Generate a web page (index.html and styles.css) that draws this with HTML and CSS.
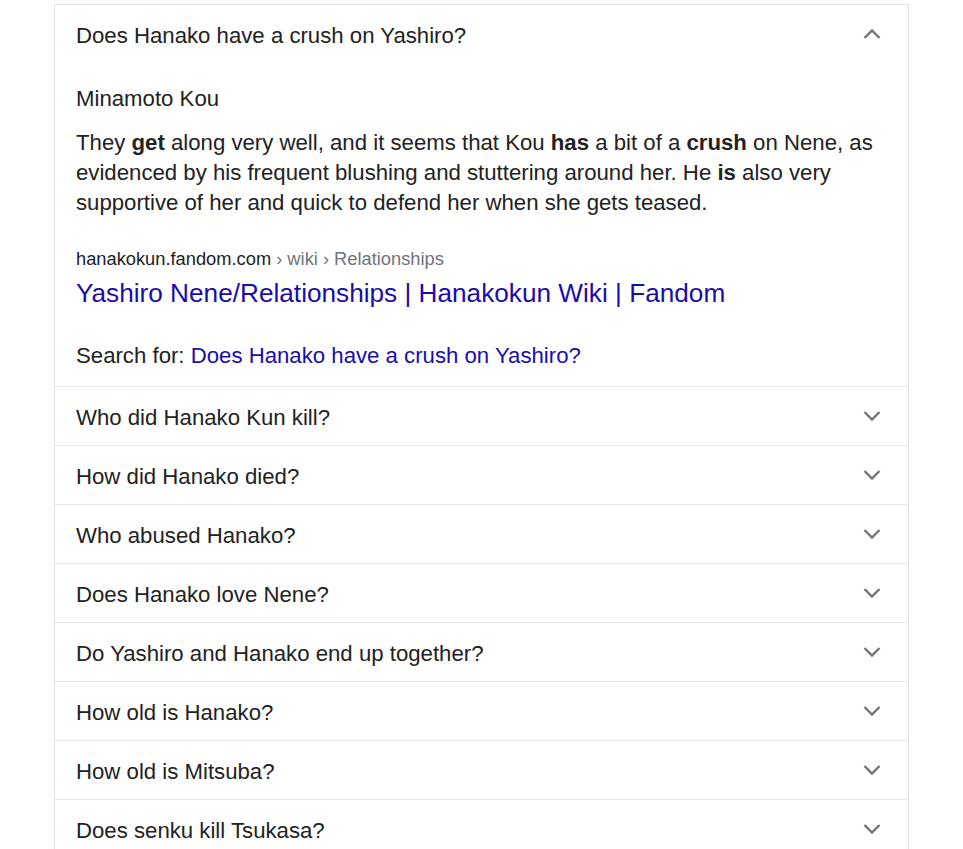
FILE: index.html
```html
<!DOCTYPE html>
<html lang="en">
<head>
  <meta charset="UTF-8" />
  <meta name="viewport" content="width=device-width, initial-scale=1.0"/>
  <title>People also ask</title>
  <link rel="stylesheet" href="styles.css">
</head>
<body>
  <!-- Related questions -->
  <div class="faq">
    <div class="faq-item open">
      <div class="faq-q">
        <span>Does Hanako have a crush on Yashiro?</span>
        <svg class="chev" viewBox="0 0 20 20"><polyline points="2.5,14 10,6.5 17.5,14"/></svg>
      </div>
      <div class="faq-a">
        <div class="a-title">Minamoto Kou</div>
        <p class="a-text">They <b>get</b> along very well, and it seems that Kou <b>has</b> a bit of a <b>crush</b> on Nene, as evidenced by his frequent blushing and stuttering around her. He <b>is</b> also very supportive of her and quick to defend her when she gets teased.</p>
        <div class="a-cite">hanakokun.fandom.com <span class="crumbs">› wiki › Relationships</span></div>
        <a class="a-link" href="#">Yashiro Nene/Relationships | Hanakokun Wiki | Fandom</a>
        <div class="a-search">Search for: <a href="#">Does Hanako have a crush on Yashiro?</a></div>
      </div>
    </div>

    <div class="faq-item">
      <div class="faq-q">
        <span>Who did Hanako Kun kill?</span>
        <svg class="chev" viewBox="0 0 20 20"><polyline points="2.5,6 10,13.5 17.5,6"/></svg>
      </div>
    </div>
    <div class="faq-item">
      <div class="faq-q">
        <span>How did Hanako died?</span>
        <svg class="chev" viewBox="0 0 20 20"><polyline points="2.5,6 10,13.5 17.5,6"/></svg>
      </div>
    </div>
    <div class="faq-item">
      <div class="faq-q">
        <span>Who abused Hanako?</span>
        <svg class="chev" viewBox="0 0 20 20"><polyline points="2.5,6 10,13.5 17.5,6"/></svg>
      </div>
    </div>
    <div class="faq-item">
      <div class="faq-q">
        <span>Does Hanako love Nene?</span>
        <svg class="chev" viewBox="0 0 20 20"><polyline points="2.5,6 10,13.5 17.5,6"/></svg>
      </div>
    </div>
    <div class="faq-item">
      <div class="faq-q">
        <span>Do Yashiro and Hanako end up together?</span>
        <svg class="chev" viewBox="0 0 20 20"><polyline points="2.5,6 10,13.5 17.5,6"/></svg>
      </div>
    </div>
    <div class="faq-item">
      <div class="faq-q">
        <span>How old is Hanako?</span>
        <svg class="chev" viewBox="0 0 20 20"><polyline points="2.5,6 10,13.5 17.5,6"/></svg>
      </div>
    </div>
    <div class="faq-item">
      <div class="faq-q">
        <span>How old is Mitsuba?</span>
        <svg class="chev" viewBox="0 0 20 20"><polyline points="2.5,6 10,13.5 17.5,6"/></svg>
      </div>
    </div>
    <div class="faq-item">
      <div class="faq-q">
        <span>Does senku kill Tsukasa?</span>
        <svg class="chev" viewBox="0 0 20 20"><polyline points="2.5,6 10,13.5 17.5,6"/></svg>
      </div>
    </div>
  </div>
</body>
</html>
```

FILE: styles.css
```css
body {
  margin: 0;
  padding: 4px 0 0 0;
  background: #fff;
  font-family: "Liberation Sans", Arial, sans-serif;
  color: #222;
  overflow: hidden;
}

.faq {
  margin-left: 54px;
  width: 853px;
  border: 1px solid #dfe1e5;
  border-bottom: none;
}

.faq-item {
  border-bottom: 1px solid #e6e6e6;
}

/* question row */
.faq-q {
  box-sizing: border-box;
  display: flex;
  align-items: center;
  justify-content: space-between;
  height: 58px;
  padding: 3px 26px 0 21px;
  font-size: 22.2px;
}

.chev {
  width: 20px;
  height: 20px;
  margin-top: -3px;
  fill: none;
  stroke: #70757a;
  stroke-width: 2.4;
}

/* expanded answer */
.faq-a {
  padding: 21px 24px 15px 21px;
  font-size: 22.2px;
  line-height: 30px;
}

.a-title {
  margin-bottom: 14px;
}

.a-text {
  margin: 0 0 30px 0;
}

.a-text b {
  font-weight: bold;
}

.a-cite {
  font-size: 18.3px;
  line-height: 22px;
  color: #202124;
}

.crumbs {
  color: #70757a;
}

.a-link {
  display: block;
  margin-top: 8px;
  font-size: 26.2px;
  line-height: 30px;
  color: #1a0dab;
  text-decoration: none;
}

.a-search {
  margin-top: 33px;
}

.a-search a {
  color: #1a0dab;
  text-decoration: none;
}
```
